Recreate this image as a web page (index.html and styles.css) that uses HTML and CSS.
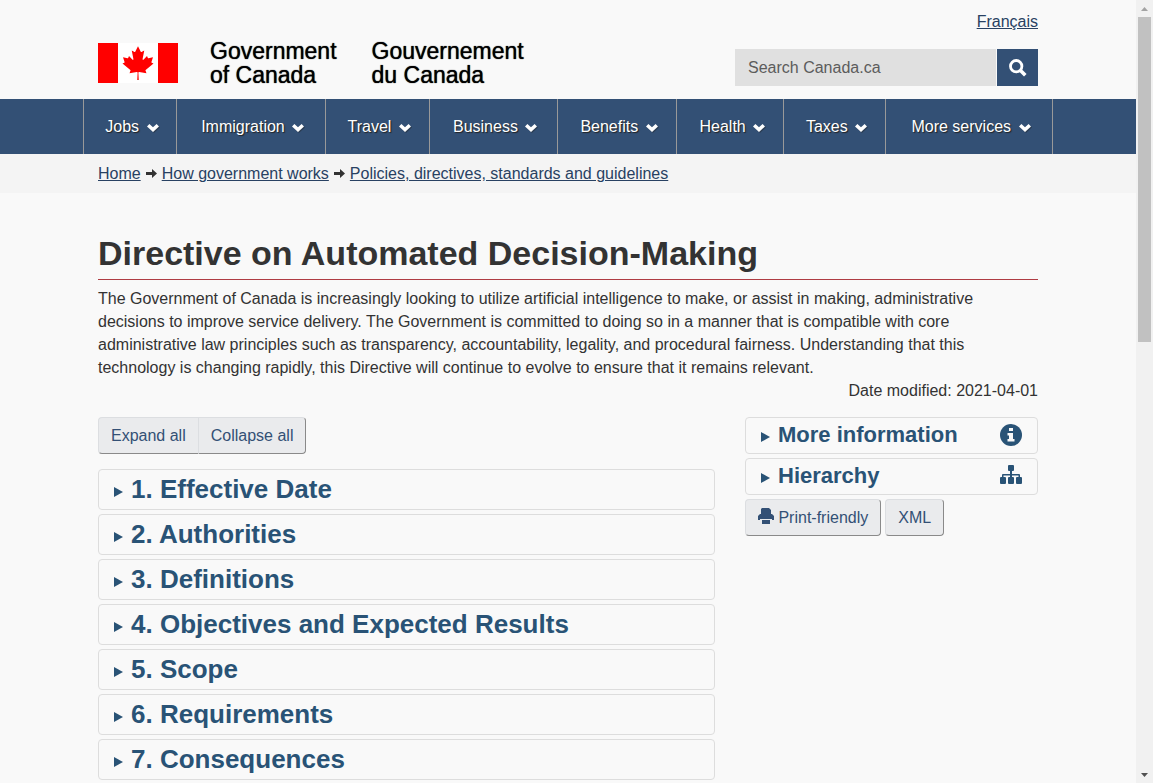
FILE: index.html
```html
<!DOCTYPE html>
<html lang="en">
<head>
    <meta charset="UTF-8">
    <meta name="viewport" content="width=device-width, initial-scale=1.0">
    <title>Directive on Automated Decision-Making - Canada.ca</title>
    <link rel="stylesheet" href="styles.css">
</head>
<body>

<!-- shared icon shapes -->
<svg class="symbols" aria-hidden="true">
    <symbol id="chevron" viewBox="0 0 12 9">
        <path d="M2.4 1 6 4.3 9.6 1 12 3.4 6 9 0 3.4z"/>
    </symbol>
    <symbol id="arrow" viewBox="0 0 11 9">
        <path d="M0 3h6V0l5 4.5L6 9V6H0z"/>
    </symbol>
</svg>

<div class="page">
    <header>
        <div class="container header-row">
            <a class="brand" href="#">
                <svg class="flag" viewBox="0 0 9600 4800" aria-label="Canada">
                    <path fill="#fff" d="M2400 0h4800v4800H2400z"/>
                    <path d="M0 0h2400v4800H0zM7200 0h2400v4800H7200z"/>
                    <path d="m4890 4430-45-863a95 95 0 0 1 111-98l859 151-116-320a65 65 0 0 1 20-73l941-762-212-99a65 65 0 0 1-34-79l186-572-542 115a65 65 0 0 1-73-38l-105-247-423 454a65 65 0 0 1-111-57l204-1052-327 189a65 65 0 0 1-91-27l-332-652-332 652a65 65 0 0 1-91 27l-327-189 204 1052a65 65 0 0 1-111 57l-423-454-105 247a65 65 0 0 1-73 38l-542-115 186 572a65 65 0 0 1-34 79l-212 99 941 762a65 65 0 0 1 20 73l-116 320 859-151a95 95 0 0 1 111 98l-45 863z"/>
                </svg>
                <span class="brand-en">Government<br>of Canada</span>
                <span lang="fr">Gouvernement<br>du Canada</span>
            </a>
            <div class="header-tools">
                <a class="lang" href="#" lang="fr">Français</a>
                <form class="search">
                    <input type="search" placeholder="Search Canada.ca" aria-label="Search Canada.ca">
                    <button type="button" aria-label="Search">
                        <svg viewBox="0 0 18 18" width="18" height="18">
                            <circle cx="7.2" cy="7.2" r="5.7" fill="none" stroke="#fff" stroke-width="2.8"/>
                            <path d="M11.5 11.5 16.3 16.3" stroke="#fff" stroke-width="3.6"/>
                        </svg>
                    </button>
                </form>
            </div>
        </div>
    </header>

    <nav class="menu" aria-label="Main">
        <ul>
            <li><a href="#">Jobs <svg><use href="#chevron"/></svg></a></li>
            <li><a href="#">Immigration <svg><use href="#chevron"/></svg></a></li>
            <li><a href="#">Travel <svg><use href="#chevron"/></svg></a></li>
            <li><a href="#">Business <svg><use href="#chevron"/></svg></a></li>
            <li><a href="#">Benefits <svg><use href="#chevron"/></svg></a></li>
            <li><a href="#">Health <svg><use href="#chevron"/></svg></a></li>
            <li><a href="#">Taxes <svg><use href="#chevron"/></svg></a></li>
            <li><a href="#">More services <svg><use href="#chevron"/></svg></a></li>
        </ul>
    </nav>

    <nav class="breadcrumb" aria-label="Breadcrumb">
        <ol class="container">
            <li><a href="#">Home</a></li>
            <li><svg><use href="#arrow"/></svg><a href="#">How government works</a></li>
            <li><svg><use href="#arrow"/></svg><a href="#">Policies, directives, standards and guidelines</a></li>
        </ol>
    </nav>

    <main class="container">
        <h1>Directive on Automated Decision-Making</h1>
        <p class="intro">The Government of Canada is increasingly looking to utilize artificial intelligence to make, or assist in making, administrative decisions to improve service delivery. The Government is committed to doing so in a manner that is compatible with core administrative law principles such as transparency, accountability, legality, and procedural fairness. Understanding that this technology is changing rapidly, this Directive will continue to evolve to ensure that it remains relevant.</p>
        <p class="modified">Date modified: 2021-04-01</p>

        <div class="columns">
            <div class="sections">
                <div class="btn-group">
                    <button type="button" class="btn">Expand all</button>
                    <button type="button" class="btn">Collapse all</button>
                </div>
                <details><summary><h2>1. Effective Date</h2></summary></details>
                <details><summary><h2>2. Authorities</h2></summary></details>
                <details><summary><h2>3. Definitions</h2></summary></details>
                <details><summary><h2>4. Objectives and Expected Results</h2></summary></details>
                <details><summary><h2>5. Scope</h2></summary></details>
                <details><summary><h2>6. Requirements</h2></summary></details>
                <details><summary><h2>7. Consequences</h2></summary></details>
            </div>

            <aside>
                <details>
                    <summary>
                        <h3>More information</h3>
                        <svg viewBox="0 0 22 22" width="22" height="22">
                            <circle cx="11" cy="11" r="11"/>
                            <path fill="#f9f9f9" d="M9 4h4v3H9zM7.5 9H13v6h1.5v2.5h-7V15H9v-3.5H7.5z"/>
                        </svg>
                    </summary>
                </details>
                <details>
                    <summary>
                        <h3>Hierarchy</h3>
                        <svg viewBox="0 0 22 22" width="22" height="22">
                            <path d="M9 0h4a1 1 0 0 1 1 1v4a1 1 0 0 1-1 1h-1v3h7a1 1 0 0 1 1 1v2h1a1 1 0 0 1 1 1v5a1 1 0 0 1-1 1h-4a1 1 0 0 1-1-1v-5a1 1 0 0 1 1-1h1.5v-1.500H12V12h1a1 1 0 0 1 1 1v5a1 1 0 0 1-1 1H9a1 1 0 0 1-1-1v-5a1 1 0 0 1 1-1h1v-1.500H3.500V12H5a1 1 0 0 1 1 1v5a1 1 0 0 1-1 1H1a1 1 0 0 1-1-1v-5a1 1 0 0 1 1-1h1v-2a1 1 0 0 1 1-1h7V6H9a1 1 0 0 1-1-1V1a1 1 0 0 1 1-1z"/>
                        </svg>
                    </summary>
                </details>
                <div class="actions">
                    <button type="button" class="btn">
                        <svg viewBox="0 0 16 16" width="16" height="16">
                            <path d="M4 0h7l2 2v4h1l2 2v4h-2v-1H2v1H0V8l2-2h1V1zM4 12h8v4H4z"/>
                        </svg>
                        Print-friendly
                    </button>
                    <button type="button" class="btn">XML</button>
                </div>
            </aside>
        </div>
    </main>
</div>

<div class="scrollbar" aria-hidden="true">
    <span class="scroll-up"></span>
    <span class="scroll-thumb"></span>
    <span class="scroll-down"></span>
</div>

</body>
</html>
```
FILE: styles.css
```css
* {
    box-sizing: border-box;
}
body {
    display: flex;
    margin: 0;
    background-color: #f9f9f9;
    color: #333;
    font-family: "Liberation Sans", Arial, sans-serif;
    font-size: 16px;
    line-height: 23px;
}
a {
    color: #284162;
}
.symbols {
    position: absolute;
    width: 0;
    height: 0;
}
.page {
    flex: 1;
    min-width: 0;
}
.container {
    max-width: 970px;
    margin: 0 auto;
    padding: 0 15px;
}

/* header */
.header-row {
    display: flex;
    justify-content: space-between;
    align-items: flex-end;
    padding-top: 10px;
    padding-bottom: 13px;
}
.brand {
    display: flex;
    align-items: center;
    margin-bottom: -1px;
    color: #000;
    font-size: 23px;
    line-height: 24px;
    text-decoration: none;
    text-shadow: 0 0 1px #000;
}
.flag {
    width: 80px;
    height: 40px;
    margin-right: 32px;
    fill: #f00;
}
.brand-en {
    margin-right: 35px;
}
.header-tools {
    display: flex;
    flex-direction: column;
    align-items: flex-end;
    gap: 16px;
}
.search {
    display: flex;
    gap: 1px;
}
.search input {
    width: 261px;
    height: 37px;
    padding: 0 13px;
    border: 0;
    background-color: #e0e0e0;
    font: inherit;
}
.search input::placeholder {
    color: #5c5c5c;
}
.search button {
    display: flex;
    justify-content: center;
    align-items: center;
    width: 41px;
    padding: 0;
    border: 0;
    background-color: #335075;
}

/* main menu */
.menu {
    background-color: #335075;
}
.menu ul {
    display: table;
    width: 100%;
    max-width: 970px;
    margin: 0 auto;
    padding: 0;
    border-left: 1px solid #999;
    list-style: none;
}
.menu li {
    display: table-cell;
    border-right: 1px solid #999;
}
.menu a {
    display: block;
    padding: 16px 12px 16px 16px;
    color: #fff;
    text-align: center;
    text-decoration: none;
    text-shadow: 1px 1px 1px #222;
    white-space: nowrap;
}
.menu svg {
    width: 12px;
    height: 9px;
    margin-left: 3px;
    fill: #fff;
    filter: drop-shadow(1px 1px 0 #2226);
}

.breadcrumb {
    background-color: #f4f4f4;
}
.breadcrumb ol {
    display: flex;
    padding-top: 8px;
    padding-bottom: 8px;
    list-style: none;
}
.breadcrumb svg {
    width: 11px;
    height: 9px;
    margin: 0 5px 1px;
    fill: #333;
}

/* content */
h1 {
    margin: 39px 0 7px;
    padding-bottom: 4px;
    border-bottom: 1px solid #af3c43;
    font-size: 34px;
    line-height: 43px;
}
p {
    margin: 0;
}
.modified {
    text-align: right;
}
.columns {
    display: grid;
    grid-template-columns: 617fr 293fr;
    gap: 30px;
    margin-top: 15px;
}
.btn {
    height: 37px;
    padding: 0 12px;
    border: 1px solid #dcdee1;
    border-right-color: #8a8a8a;
    border-bottom-color: #8a8a8a;
    border-radius: 4px;
    background-color: #eaebed;
    color: #335075;
    font: inherit;
}
.btn svg {
    fill: #335075;
    vertical-align: -1px;
}
.btn-group {
    display: flex;
    margin-bottom: 15px;
}
.btn-group .btn:first-child {
    border-right: 0;
    border-radius: 4px 0 0 4px;
}
.btn-group .btn:last-child {
    border-radius: 0 4px 4px 0;
}
details {
    margin-bottom: 4px;
    border: 1px solid #ddd;
    border-radius: 4px;
    color: #295376;
}
summary {
    display: flex;
    align-items: center;
    padding: 0 15px;
    list-style: none;
    cursor: pointer;
}
summary::before {
    content: "";
    width: 9px;
    height: 10px;
    margin: 5px 8px 0 0;
    background-color: #295376;
    clip-path: polygon(0 0, 100% 50%, 0 100%);
}
summary svg {
    margin-left: auto;
    fill: #295376;
}
h2, h3 {
    margin: 0;
}
h2 {
    font-size: 26px;
    line-height: 39px;
}
h3 {
    font-size: 22px;
    line-height: 33px;
}
aside summary {
    padding-bottom: 2px;
}
.actions {
    display: flex;
    gap: 4px;
}

/* scroll bar */
.scrollbar {
    position: sticky;
    top: 0;
    display: flex;
    flex-direction: column;
    align-items: center;
    width: 17px;
    height: 100vh;
    background-color: #f1f1f1;
}
.scroll-thumb {
    width: 13px;
    height: 325px;
    background-color: #c1c1c1;
}
.scroll-up {
    height: 17px;
}
.scroll-up::before,
.scroll-down::before {
    content: "";
    display: block;
    width: 7px;
    height: 4px;
    margin-top: 7px;
    background-color: #a3a3a3;
    clip-path: polygon(50% 0, 100% 100%, 0 100%);
}
.scroll-down {
    height: 17px;
    margin-top: auto;
}
.scroll-down::before {
    background-color: #505050;
    clip-path: polygon(0 0, 100% 0, 50% 100%);
}
```
